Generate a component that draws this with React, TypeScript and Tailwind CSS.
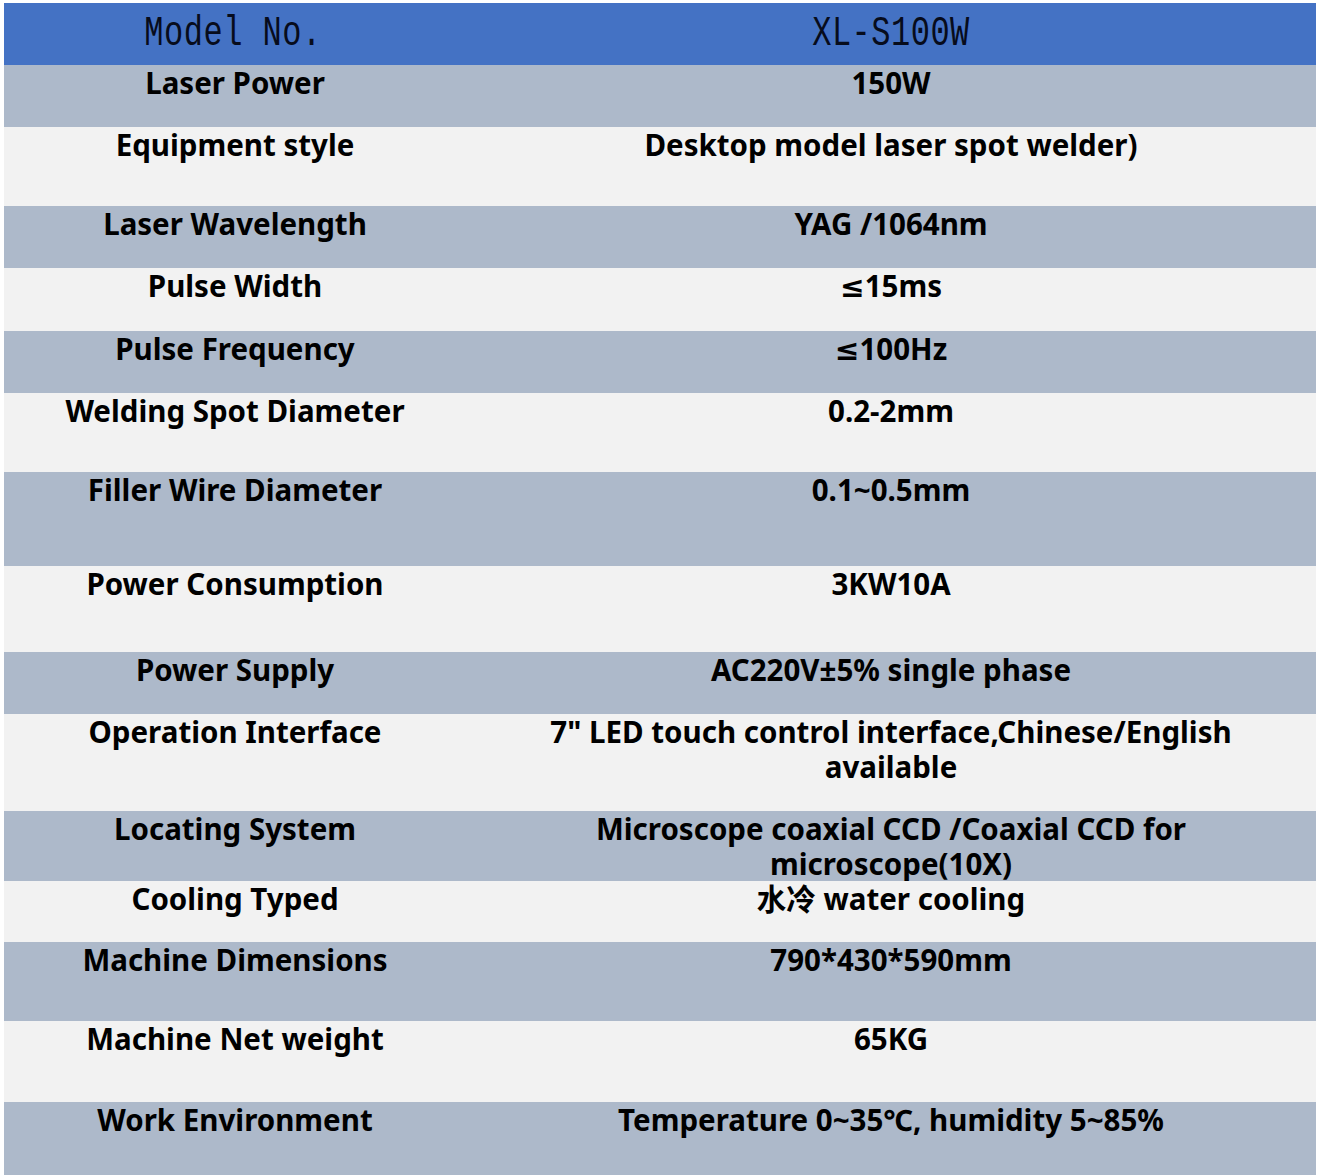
import React from "react";

type Row = { label: string; value: React.ReactNode; h: number; bg: string };

const G = "bg-[#adb9ca]";
const L = "bg-[#f2f2f2]";

const Le = () => <span className="font-['DejaVu_Sans',sans-serif] font-bold">≤</span>;

const rows: Row[] = [
  { label: "Laser Power", value: "150W", h: 62, bg: G },
  { label: "Equipment style", value: "Desktop model laser spot welder)", h: 79, bg: L },
  { label: "Laser Wavelength", value: "YAG /1064nm", h: 62, bg: G },
  { label: "Pulse Width", value: <><Le />15ms</>, h: 63, bg: L },
  { label: "Pulse Frequency", value: <><Le />100Hz</>, h: 62, bg: G },
  { label: "Welding Spot Diameter", value: "0.2-2mm", h: 79, bg: L },
  { label: "Filler Wire Diameter", value: "0.1~0.5mm", h: 94, bg: G },
  { label: "Power Consumption", value: "3KW10A", h: 86, bg: L },
  { label: "Power Supply", value: "AC220V±5% single phase", h: 62, bg: G },
  {
    label: "Operation Interface",
    value: (
      <>
        7" LED touch control interface,Chinese/English
        <br />
        available
      </>
    ),
    h: 97,
    bg: L,
  },
  {
    label: "Locating System",
    value: (
      <>
        Microscope coaxial CCD /Coaxial CCD for
        <br />
        microscope(10X)
      </>
    ),
    h: 70,
    bg: G,
  },
  { label: "Cooling Typed", value: "水冷 water cooling", h: 61, bg: L },
  { label: "Machine Dimensions", value: "790*430*590mm", h: 79, bg: G },
  { label: "Machine Net weight", value: "65KG", h: 81, bg: L },
  { label: "Work Environment", value: "Temperature 0~35℃, humidity 5~85%", h: 80, bg: G },
];

export default function App() {
  return (
    <div className="min-h-[1175px] bg-white overflow-hidden">
      <div className="ml-[4px] mt-[3px] w-[1312px] flex flex-col">
        <div className="flex h-[62px] bg-[#4472c4] text-[#070c1c]">
          <div className="w-[462px] flex justify-center pt-[8px] pr-[4px]">
            <span
              className="inline-block origin-top scale-y-[1.3] text-[32px] leading-[36px] whitespace-pre tracking-[0.5px]"
              style={{ fontFamily: '"Liberation Mono", monospace' }}
            >
              Model No.
            </span>
          </div>
          <div className="flex-1 flex justify-center pt-[8px]">
            <span
              className="inline-block origin-top scale-y-[1.3] text-[32px] leading-[36px] tracking-[0.5px]"
              style={{ fontFamily: '"Liberation Mono", monospace' }}
            >
              XL-S100W
            </span>
          </div>
        </div>
        {rows.map((r, i) => (
          <div
            key={i}
            className={`flex ${r.bg} text-black font-bold text-[29.5px] leading-[35px] font-['Noto_Sans','Noto_Sans_CJK_SC',sans-serif]`}
            style={{ height: r.h }}
          >
            <div className="w-[462px] text-center">{r.label}</div>
            <div className="flex-1 text-center">{r.value}</div>
          </div>
        ))}
      </div>
    </div>
  );
}
